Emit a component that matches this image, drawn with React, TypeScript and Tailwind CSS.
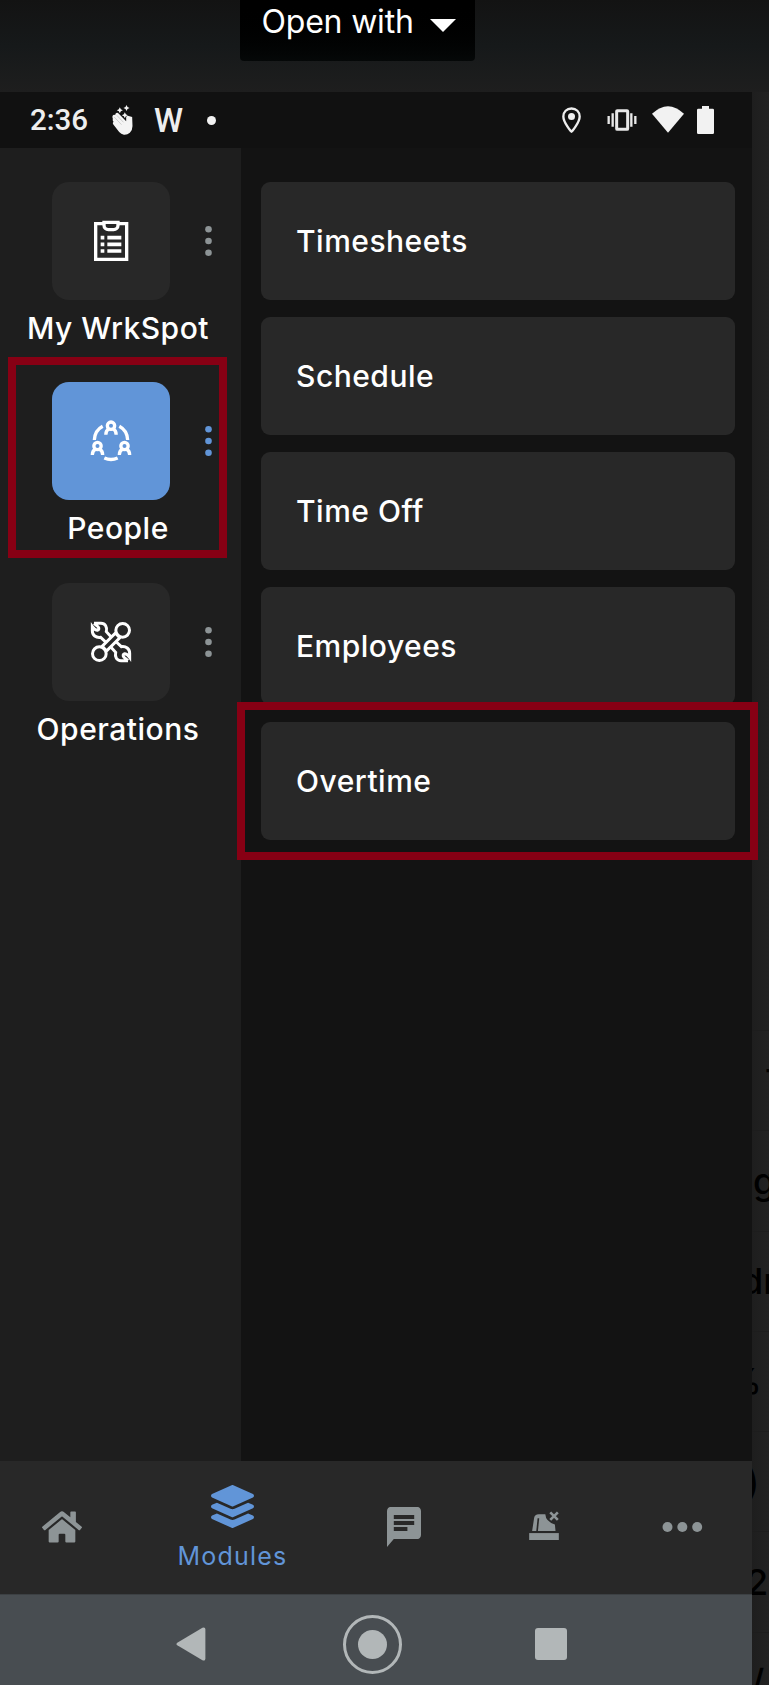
import type { ReactNode } from "react";
import { FaHome, FaLayerGroup } from "react-icons/fa";

interface Module {
  label: string;
  icon: ReactNode;
  active?: boolean;
}

function ClipboardIcon() {
  return (
    <svg viewBox="0 0 120 120" className="size-10 overflow-visible" fill="none" stroke="white" strokeWidth="10">
      <path d="M14 8h93v107H14z" />
      <path d="M39 4h42v9a13 13 0 0 1-13 13H52a13 13 0 0 1-13-13z" fill="#282828" />
      <path d="M29 50h11M49 50h42M29 70h11M49 70h42M29 90h11M49 90h42" strokeWidth="11" />
    </svg>
  );
}

function Person({ x, y }: { x: number; y: number }) {
  return (
    <g transform={`translate(${x} ${y})`}>
      <circle r="11" />
      <path d="M-15.500 27c0-8 3-14 9-18M15.500 27c0-8-3-14-9-18" />
    </g>
  );
}

function PeopleIcon() {
  return (
    <svg viewBox="0 0 120 120" className="size-10 overflow-visible" fill="none" stroke="white" strokeWidth="10">
      <path d="M10 57C11 38 20 24 35 16M110 57C109 38 100 24 85 16M40 111q20 9 40 0" />
      <Person x={60} y={14} />
      <Person x={19.5} y={75} />
      <Person x={100.5} y={75} />
    </svg>
  );
}

function ToolsIcon() {
  const wrench =
    "M9 4L21 14Q27 22 19 25Q12 25 4 14V26C4 40 15 48 29 46L44 60M9 4H30C43 4 49 15 46 29L60 44";
  return (
    <svg viewBox="0 0 120 120" className="size-10 overflow-visible" fill="none" stroke="white" strokeWidth="9">
      <path d={wrench} />
      <path d={wrench} transform="rotate(180 60 60)" />
      <circle cx="95" cy="25" r="20.500" />
      <circle cx="25" cy="95" r="20.500" />
      <rect x="32" y="50.500" width="56" height="19" fill="#282828" transform="rotate(-45 60 60)" />
    </svg>
  );
}

const modules: Module[] = [
  { label: "My WrkSpot", icon: <ClipboardIcon /> },
  { label: "People", icon: <PeopleIcon />, active: true },
  { label: "Operations", icon: <ToolsIcon /> },
];

const links = ["Timesheets", "Schedule", "Time Off", "Employees", "Overtime"];

// page content that peeks out behind the phone's right edge
const backdropRows = [
  { text: "-", className: "ml-[12px] -mt-[24px]" },
  { text: "g", className: "ml-[1px]" },
  { text: "dr", className: "-ml-[11px]" },
  { text: "%", className: "-ml-[26px] -mt-[2px]" },
  { text: ")", className: "-ml-[6px]" },
  { text: "2", className: "-ml-[6px]" },
  { text: "/", className: "-ml-[1px]" },
];

function Header() {
  return (
    <header className="flex h-[92px] justify-center bg-linear-to-b from-[#131313] via-[#16191a] to-[#1e1e1e] pr-[55px]">
      <div className="flex h-[61px] w-[235px] items-start rounded-b-[4px] bg-linear-to-b from-black to-[#050808] pl-[22px]">
        <span className="mt-[2px] w-[151px] text-[32px] leading-[40px] tracking-[-0.200px] whitespace-nowrap text-white">
          Open with
        </span>
        <svg viewBox="0 0 26 13" className="mt-[19px] ml-[17px] h-[13px] w-[26px]" fill="white">
          <path d="M0 0h26L13 13z" />
        </svg>
      </div>
    </header>
  );
}

function StatusBar() {
  return (
    <div className="flex h-14 items-center bg-[#111111] pl-[30px] text-white">
      <span className="mt-[2px] w-[57px] font-[Roboto,sans-serif] text-[29.500px] leading-none font-medium text-[#eeeeee]">
        2:36
      </span>
      <svg viewBox="0 0 62 90" className="ml-[25px] h-[30px] w-[21px]">
        <g fill="#f4f4f4">
          <path d="M1 33q3-6 8-3l1-4q5-5 10 0l22 23V36q3-6 10-2l8 2 1 27q0 13-8 20-8 7-18 6-8-1-14-8L3 58q-3-5 1-8-4-4-2-9-2-4-1-8z" />
          <path d="M23 7l3 6 6 3-6 3-3 6-3-6-6-3 6-3zM43 0l3 6 6 3-6 3-3 6-3-6-6-3 6-3zM38 22l3 6 6 3-6 3-3 6-3-6-6-3 6-3z" />
        </g>
        <path d="M6 36l22 23M14 31l20 21" stroke="#bbb" strokeWidth="2" />
      </svg>
      <span className="ml-[21px] w-[30px] font-[Roboto,sans-serif] text-[33px] leading-none font-medium text-[#eeeeee]">
        W
      </span>
      <span className="ml-[23px] size-[9px] rounded-full bg-[#f2f2f2]" />
      <svg viewBox="0 0 57 80" className="ml-[346px] h-[27px] w-[19px]">
        <path d="M28.500 4C14 4 4 14 4 28c0 18 24 46 24.500 46S53 46 53 28C53 14 43 4 28.500 4z" fill="none" stroke="#eee" strokeWidth="7" />
        <circle cx="28.500" cy="28" r="10.500" fill="#eee" />
      </svg>
      <svg viewBox="0 0 90 66" className="ml-[26px] h-[22px] w-[30px]" fill="none" stroke="#e8e8e8">
        <rect x="29" y="5" width="33" height="56" rx="2" strokeWidth="9" />
        <path d="M17 13v40M73 13v40M5 21v24M85 21v24" strokeWidth="7" />
      </svg>
      <svg viewBox="0 0 96 80" className="-mt-px ml-[15px] h-[27px] w-[32px]" fill="#f2f2f2">
        <path d="M0 23Q48-22 96 23L48 80z" />
      </svg>
      <svg viewBox="0 0 51 84" className="-mt-px ml-[13px] h-[28px] w-[17px]" fill="#f2f2f2">
        <path d="M15 0h21v8h11q4 0 4 4v68q0 4-4 4H4q-4 0-4-4V12q0-4 4-4h11z" />
      </svg>
    </div>
  );
}

function Sidebar() {
  return (
    <aside className="flex w-[241px] flex-col gap-[22px] bg-[#1e1e1e] pt-[34px]">
      {modules.map((m) => (
        <div key={m.label} className="relative h-[178.400px]">
          <div className="flex items-center pl-[52px]">
            <div
              className={
                m.active
                  ? "flex size-[118px] items-center justify-center rounded-[17px] bg-[#6195d8]"
                  : "flex size-[118px] items-center justify-center rounded-[17px] bg-[#282828]"
              }
            >
              {m.icon}
            </div>
            <div className={m.active ? "ml-[35px] text-[#6195d8]" : "ml-[35px] text-[#8d9496]"}>
              <svg viewBox="0 0 7 30" className="h-[30px] w-[7px]" fill="currentColor">
                <circle cx="3.500" cy="3.300" r="3.300" />
                <circle cx="3.500" cy="15" r="3.300" />
                <circle cx="3.500" cy="26.700" r="3.300" />
              </svg>
            </div>
          </div>
          <div className="mt-[8px] pr-[5px] text-center text-[30px] leading-[40px] font-medium tracking-[0.500px] whitespace-nowrap text-white">
            {m.label}
          </div>
          {m.active && (
            <div className="absolute -top-[25px] left-[8px] h-[201px] w-[219px] border-8 border-[#870014]" />
          )}
        </div>
      ))}
    </aside>
  );
}

function LinkList() {
  return (
    <main className="flex flex-1 flex-col gap-[17px] bg-[#131313] pt-[34px] pr-[17px] pl-[20px]">
      {links.map((label) => (
        <div
          key={label}
          className="relative flex h-[118px] items-center rounded-[9px] bg-[#282828] pl-[35px] text-[30px] font-medium tracking-[0.500px] text-white"
        >
          {label}
          {label === "Overtime" && (
            <div className="absolute -top-[20px] -left-[24px] z-10 h-[158px] w-[521px] border-8 border-[#870014]" />
          )}
        </div>
      ))}
    </main>
  );
}

function TabBar() {
  return (
    <nav className="flex h-[133px] items-center bg-[#282828] pb-px text-[#8d9496]">
      <FaHome className="ml-[42px] h-[36px] w-[40px]" />
      <div className="ml-[92px] flex w-[117px] flex-col items-center pt-[6px] text-[#6195d8]">
        <FaLayerGroup className="size-[43px]" />
        <span className="mt-[8px] text-[25px] leading-[40px] tracking-[1.200px]">Modules</span>
      </div>
      <svg viewBox="2 2 20 20" preserveAspectRatio="none" className="ml-[96px] h-[40px] w-[34px]" fill="currentColor">
        <path d="M20 2H4c-1.100 0-1.990.9-1.990 2L2 22l4-4h14c1.100 0 2-.9 2-2V4c0-1.100-.9-2-2-2zM6 9h12v2H6V9zm8 5H6v-2h8v2zm4-6H6V6h12v2z" />
      </svg>
      <svg viewBox="0 0 90 88" className="-mt-[3px] ml-[108px] h-[29px] w-[30px]" fill="currentColor">
        <path d="M0 67h90v21H0z" />
        <path d="M9 61l6-40Q17 10 29 10h20q1 22 29 31l2 20z" />
        <path d="M28 22l-4 39" stroke="#282828" strokeWidth="5" />
        <path d="M64 4l23 23M87 4L64 27" stroke="currentColor" strokeWidth="8" />
      </svg>
      <svg viewBox="0 0 124 31" className="ml-[103px] h-[10px] w-[41px]" fill="currentColor">
        <circle cx="15.500" cy="15.500" r="15.500" />
        <circle cx="61.500" cy="15.500" r="15.500" />
        <circle cx="107.500" cy="15.500" r="15.500" />
      </svg>
    </nav>
  );
}

function SystemBar() {
  return (
    <div className="flex h-[91px] items-center border-t border-[#3c4043] bg-[#484d51] pt-[8px] text-[#b2b7b8]">
      <svg viewBox="0 0 90 104" className="ml-[176px] h-[34px] w-[30px]" fill="currentColor">
        <path d="M3 48L80 2q9-3 9 6v88q0 9-9 6L3 56q-5-4 0-8z" />
      </svg>
      <div className="ml-[137px] flex size-[59px] items-center justify-center rounded-full border-[3px] border-current">
        <div className="size-[29px] rounded-full bg-current" />
      </div>
      <div className="ml-[133px] size-[32px] rounded-[3px] bg-current" />
    </div>
  );
}

function Backdrop() {
  return (
    <div className="w-[17px] overflow-hidden bg-linear-to-r from-[#1e1e1e] to-[#222222] pt-[938px] text-black">
      {backdropRows.map((row) => (
        <div key={row.text} className="flex h-[100.300px] items-center border-t border-[#1d1d1d]">
          <span className={`${row.className} text-[36px] leading-none font-medium whitespace-nowrap`}>{row.text}</span>
        </div>
      ))}
    </div>
  );
}

export default function App() {
  return (
    <div className="flex h-[1685px] w-[769px] flex-col overflow-hidden bg-[#1e1e1e] font-[Inter,sans-serif]">
      <Header />
      <div className="flex h-[1593px]">
        <div className="flex w-[752px] shrink-0 flex-col">
          <StatusBar />
          <div className="flex flex-1">
            <Sidebar />
            <LinkList />
          </div>
          <TabBar />
          <SystemBar />
        </div>
        <Backdrop />
      </div>
    </div>
  );
}
